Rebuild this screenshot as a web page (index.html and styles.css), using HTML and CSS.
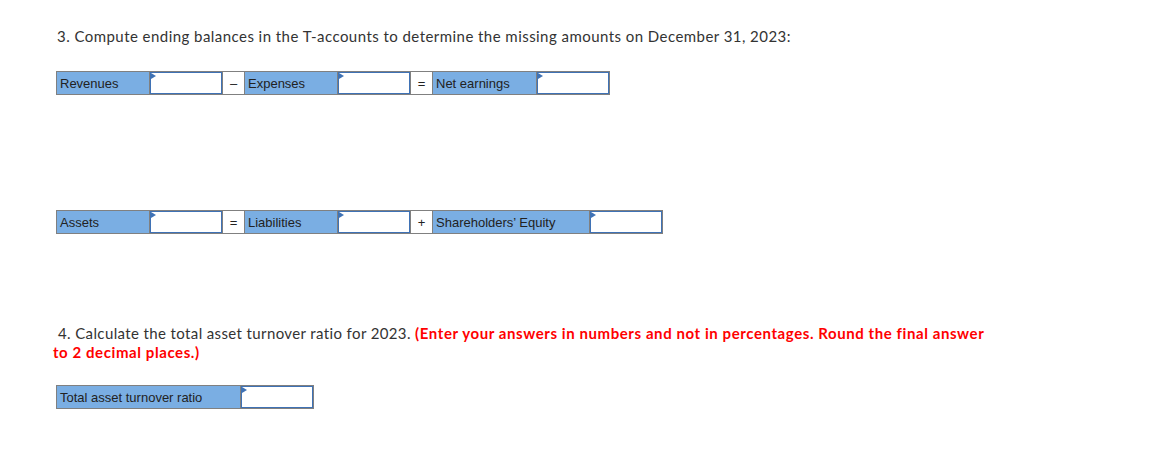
FILE: index.html
```html
<!DOCTYPE html>
<html>
<head>
<meta charset="utf-8">
<link rel="stylesheet" href="styles.css">
</head>
<body>
<div class="page">
  <p class="q q3">3. Compute ending balances in the T-accounts to determine the missing amounts on December 31, 2023:</p>

  <div class="eq eq1">
    <div class="lbl w92">Revenues</div>
    <div class="inp"><span class="tri"></span></div>
    <div class="op">–</div>
    <div class="lbl w93">Expenses</div>
    <div class="inp"><span class="tri"></span></div>
    <div class="op">=</div>
    <div class="lbl w104">Net earnings</div>
    <div class="inp"><span class="tri"></span></div>
  </div>

  <div class="eq eq2">
    <div class="lbl w92">Assets</div>
    <div class="inp"><span class="tri"></span></div>
    <div class="op">=</div>
    <div class="lbl w93">Liabilities</div>
    <div class="inp"><span class="tri"></span></div>
    <div class="op">+</div>
    <div class="lbl w157">Shareholders’ Equity</div>
    <div class="inp"><span class="tri"></span></div>
  </div>

  <p class="q q4"><span class="first">4. Calculate the total asset turnover ratio for 2023. </span><strong class="red">(Enter your answers in numbers and not in percentages. Round the final answer</strong><br><strong class="red">to 2 decimal places.)</strong></p>

  <div class="eq eq3">
    <div class="lbl w183">Total asset turnover ratio</div>
    <div class="inp"><span class="tri"></span></div>
  </div>
</div>
</body>
</html>
```
FILE: styles.css
```css
html, body {
  margin: 0;
  padding: 0;
  background: #ffffff;
}
.page {
  padding: 27px 0 0 53px;
}
.q {
  font-family: "Lato", "Open Sans", sans-serif;
  font-size: 15px;
  letter-spacing: 0.45px;
  color: #333333;
  margin: 0;
  line-height: 19px;
}
.q3 {
  padding-left: 4px;
}
.q4 {
  text-indent: 5px;
}
.q4 .first {
  letter-spacing: 0.38px;
}
.red {
  color: #ff0000;
  font-weight: bold;
  letter-spacing: 0.58px;
}
.eq {
  display: flex;
  width: max-content;
  border: 1px solid #808080;
  margin-left: 3px;
  font-family: "Liberation Sans", Arial, sans-serif;
  font-size: 13px;
  color: #222222;
}
.eq1 { margin-top: 25px; }
.eq2 { margin-top: 115px; }
.q4 { margin-top: 90px; }
.eq3 { margin-top: 23px; }
.eq > div {
  height: 22px;
  box-sizing: border-box;
  border-left: 1px solid #808080;
}
.eq > div:first-child {
  border-left: none;
}
.lbl {
  background: #7aaee3;
  padding-left: 3px;
  display: flex;
  align-items: center;
}
.w92 { width: 92px; }
.w93 { width: 93px; }
.w104 { width: 104px; }
.w157 { width: 157px; }
.w183 { width: 183px; }
.inp {
  width: 73px;
  background: #ffffff;
  position: relative;
  box-shadow: inset 0 0 0 1px #3f72b5;
}
.tri {
  position: absolute;
  left: 1px;
  top: 1px;
  width: 0;
  height: 0;
  border-top: 3px solid transparent;
  border-bottom: 3px solid transparent;
  border-left: 5px solid #3f72b5;
}
.op {
  width: 22px;
  background: #ffffff;
  display: flex;
  align-items: center;
  justify-content: center;
}
```
